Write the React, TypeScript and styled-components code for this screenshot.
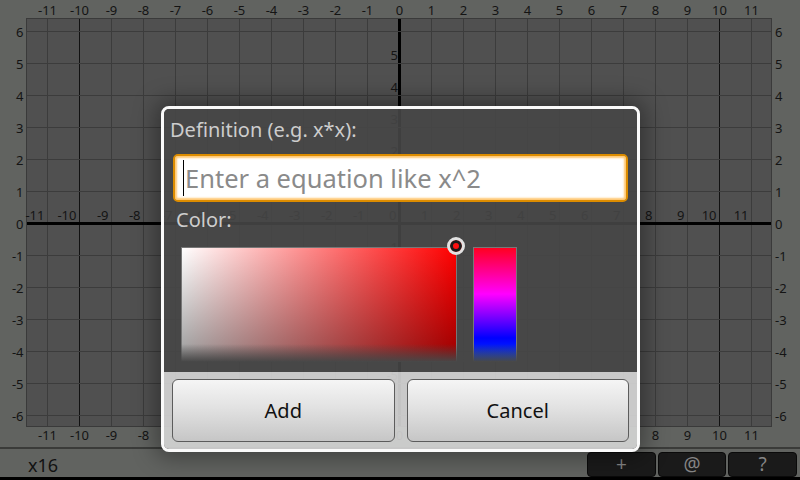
import React from 'react'
import styled, { createGlobalStyle } from 'styled-components'

const GlobalStyle = createGlobalStyle`
  html, body {
    margin: 0;
    padding: 0;
    background: #000;
  }
  body {
    font-family: 'Noto Sans', 'DejaVu Sans', sans-serif;
  }
`

// grid geometry, in screen pixels
const UNIT = 32
const OX = 399.5
const OY = 223.5
const range = (from: number, to: number) => Array.from({ length: to - from + 1 }, (_, i) => from + i)
const XS = range(-11, 11)
const YS = range(-6, 6)

const Screen = styled.div`
  position: relative;
  width: 800px;
  height: 480px;
  display: flex;
  flex-direction: column;
  background: #616360;
  overflow: hidden;
`
const GraphArea = styled.div`
  flex: none;
  height: 447px;
  svg {
    display: block;
  }
  text {
    font-family: 'Noto Sans', 'DejaVu Sans', sans-serif;
    font-size: 13px;
    fill: #141414;
  }
`
const Divider = styled.div`
  flex: none;
  height: 2px;
  background: #3a3b39;
`
const BottomBar = styled.div`
  flex: 1;
  display: flex;
  align-items: stretch;
  gap: 2px;
  padding: 3px 3px 0 28px;
`
const ZoomLabel = styled.span`
  flex: 1;
  align-self: center;
  font-size: 18px;
  color: #121212;
`
const ToolButton = styled.button<{ $wide?: boolean }>`
  width: ${(props) => (props.$wide ? '69px' : '68px')};
  padding: 0;
  border: 1px solid #0a0a0a;
  border-radius: 4px;
  background: #1a1a1a;
  color: #858585;
  font-family: 'Noto Sans', 'DejaVu Sans', sans-serif;
  font-size: 19px;
  line-height: 1;
`
const BlackStrip = styled.div`
  flex: none;
  height: 3px;
  background: #000;
`

const Dialog = styled.div`
  position: absolute;
  left: 161px;
  top: 106px;
  width: 479px;
  height: 346px;
  box-sizing: border-box;
  border: 3px solid #fafafa;
  border-radius: 8px;
  display: flex;
  flex-direction: column;
  overflow: hidden;
  box-shadow: 0 0 22px 6px rgba(0, 0, 0, 0.35);
`
const DialogBody = styled.div`
  flex: 1;
  display: flex;
  flex-direction: column;
  padding-top: 9px;
  background: rgba(70, 70, 70, 0.9);
`
const FieldLabel = styled.div<{ $indent: number; $gap: number }>`
  margin: ${(props) => props.$gap}px 0 0 ${(props) => props.$indent}px;
  font-size: 20px;
  line-height: 24px;
  color: #cdcdcd;
`
const InputWrap = styled.div`
  position: relative;
  width: 455px;
  margin: 12px 0 0 9px;
`
const EquationInput = styled.input`
  display: block;
  width: 100%;
  height: 48px;
  box-sizing: border-box;
  border: 2px solid #dc8c00;
  border-radius: 5px;
  padding: 0 0 0 10px;
  background: #fff;
  box-shadow: inset 0 0 2px 2px #ffc873;
  outline: none;
  font-family: 'Noto Sans', 'DejaVu Sans', sans-serif;
  font-size: 25.5px;
  color: #222;
  &::placeholder {
    color: #8a8a8a;
  }
`
const Caret = styled.span`
  position: absolute;
  left: 10px;
  top: 6px;
  width: 1px;
  height: 36px;
  background: #000;
`
const PickerRow = styled.div`
  position: relative;
  align-self: flex-start;
  display: flex;
  gap: 16px;
  height: 115px;
  margin: 15px 0 0 17px;
`
const SatValBox = styled.div`
  width: 276px;
  box-sizing: border-box;
  border: 1px solid #777;
  background: linear-gradient(to bottom, rgba(0, 0, 0, 0), rgba(0, 0, 0, 0.4)),
    linear-gradient(to right, #ffffff, #ff0000);
`
const HueBar = styled.div`
  width: 44px;
  box-sizing: border-box;
  border: 1px solid #777;
  background: linear-gradient(
    to bottom,
    #ff0020 0px,
    #ff0080 20px,
    #ff00ff 46px,
    #8000ff 68px,
    #0000ff 90px,
    #0040ff 112px
  );
`
const FadeEdge = styled.div`
  position: absolute;
  left: 0;
  right: 0;
  bottom: 0;
  height: 18px;
  background: linear-gradient(to bottom, rgba(71, 71, 71, 0), #474747);
`
const Selector = styled.span`
  position: absolute;
  left: 266px;
  top: -10px;
  width: 18px;
  height: 18px;
  box-sizing: border-box;
  border: 3px solid #e2e2e2;
  border-radius: 50%;
  background: #ff1010;
  box-shadow: inset 0 0 0 3px #1c1c1c;
`
const ButtonBar = styled.div`
  flex: none;
  height: 77px;
  box-sizing: border-box;
  padding: 7px 8px;
  display: grid;
  grid-template-columns: 1fr 1fr;
  column-gap: 12px;
  background: rgba(212, 212, 212, 0.92);
`
const DialogButton = styled.button`
  border: 1px solid #5c5c5c;
  border-radius: 6px;
  background: linear-gradient(to bottom, #f5f5f5 0%, #e2e2e2 45%, #c6c6c6 100%);
  font-family: 'Noto Sans', 'DejaVu Sans', sans-serif;
  font-size: 20px;
  color: #111;
`

const GraphCanvas: React.FC = () => {
  const gx = (k: number) => OX + k * UNIT
  const gy = (k: number) => OY - k * UNIT
  const lineColor = (k: number) => (k === 0 ? '#000' : Math.abs(k) === 10 ? '#111' : '#3c3c3c')
  return (
    <svg width={800} height={447} viewBox="0 0 800 447">
      <rect x={26.5} y={18.5} width={745} height={408} fill="#505050" stroke="#3a3a3a" />
      {XS.map((k) => (
        <line key={`v${k}`} x1={gx(k)} x2={gx(k)} y1={19} y2={426} stroke={lineColor(k)} strokeWidth={k === 0 ? 3 : 1} />
      ))}
      {YS.map((k) => (
        <line key={`h${k}`} x1={27} x2={771} y1={gy(k)} y2={gy(k)} stroke={lineColor(k)} strokeWidth={k === 0 ? 3 : 1} />
      ))}
      {XS.map((k) => (
        <React.Fragment key={`xl${k}`}>
          <text x={gx(k)} y={15} textAnchor="middle">{k}</text>
          <text x={gx(k)} y={440} textAnchor="middle">{k}</text>
          <text x={gx(k) - 3} y={220} textAnchor="end">{k}</text>
        </React.Fragment>
      ))}
      {YS.map((k) => (
        <React.Fragment key={`yl${k}`}>
          <text x={23.5} y={gy(k) + 5} textAnchor="end">{k}</text>
          <text x={775} y={gy(k) + 5}>{k}</text>
          {k !== 0 && Math.abs(k) < 6 && (
            <text x={398} y={gy(k) - 4} textAnchor="end">{k}</text>
          )}
        </React.Fragment>
      ))}
    </svg>
  )
}

const App: React.FC = () => {
  return (
    <Screen>
      <GlobalStyle />
      <GraphArea>
        <GraphCanvas />
      </GraphArea>
      <Divider />
      <BottomBar>
        <ZoomLabel>x16</ZoomLabel>
        <ToolButton $wide>+</ToolButton>
        <ToolButton>@</ToolButton>
        <ToolButton $wide>?</ToolButton>
      </BottomBar>
      <BlackStrip />

      <Dialog>
        <DialogBody>
          <FieldLabel $indent={6} $gap={0}>Definition (e.g. x*x):</FieldLabel>
          <InputWrap>
            <EquationInput placeholder="Enter a equation like x^2" readOnly />
            <Caret />
          </InputWrap>
          <FieldLabel $indent={12} $gap={6}>Color:</FieldLabel>
          <PickerRow>
            <SatValBox />
            <HueBar />
            <FadeEdge />
            <Selector />
          </PickerRow>
        </DialogBody>
        <ButtonBar>
          <DialogButton>Add</DialogButton>
          <DialogButton>Cancel</DialogButton>
        </ButtonBar>
      </Dialog>
    </Screen>
  )
}

export default App
